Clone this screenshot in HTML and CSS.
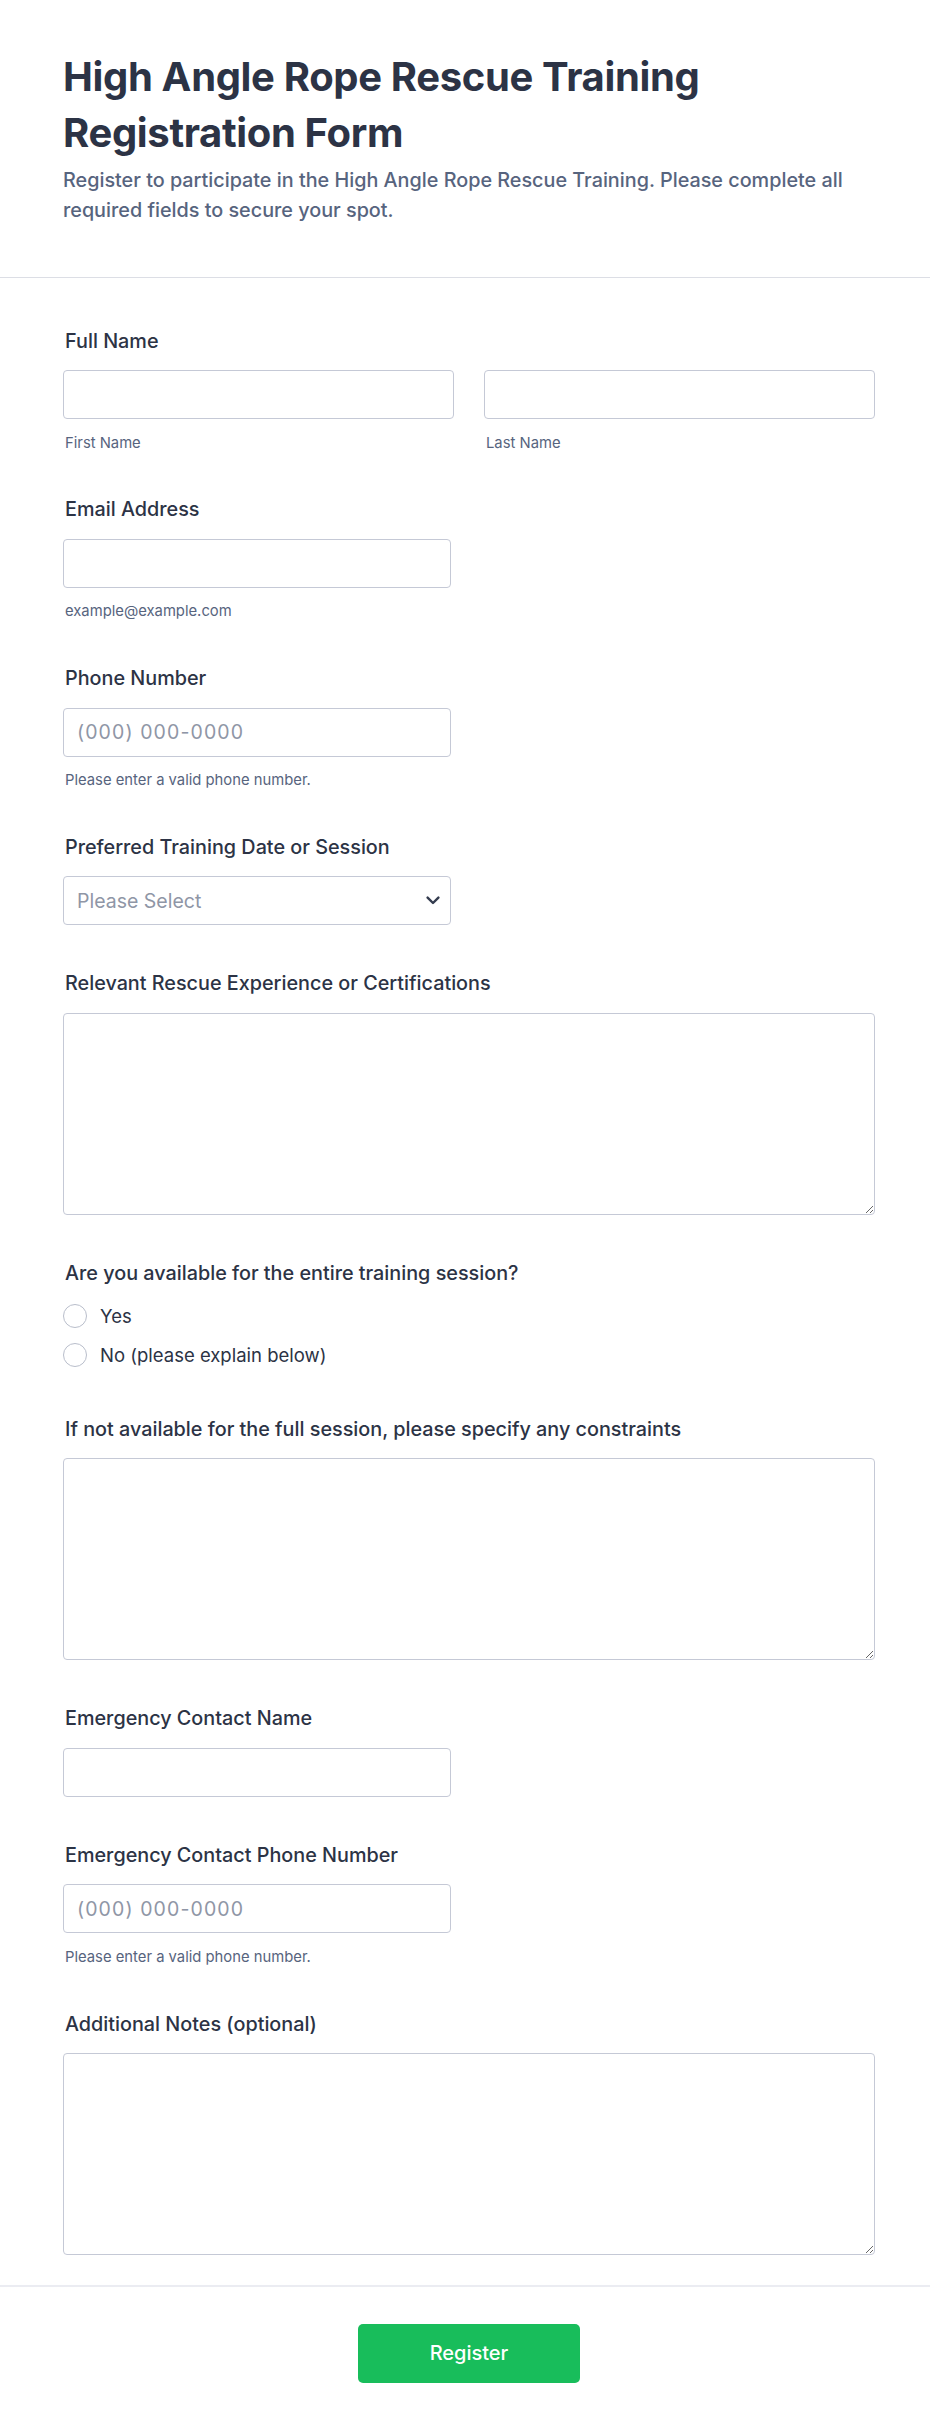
FILE: index.html
```html
<!DOCTYPE html>
<html lang="en">
<head>
<meta charset="utf-8">
<title>High Angle Rope Rescue Training Registration Form</title>
<link rel="stylesheet" href="styles.css">
</head>
<body>
<div class="form">
  <header class="form-header">
    <h1 class="form-title">High Angle Rope Rescue Training Registration Form</h1>
    <p class="form-desc">Register to participate in the High Angle Rope Rescue Training. Please complete all required fields to secure your spot.</p>
  </header>

  <main class="form-body">
    <div class="field field-sub">
      <label class="field-label">Full Name</label>
      <div class="name-row">
        <div class="name-col">
          <input class="input" type="text">
          <span class="sublabel">First Name</span>
        </div>
        <div class="name-col">
          <input class="input" type="text">
          <span class="sublabel">Last Name</span>
        </div>
      </div>
    </div>

    <div class="field field-sub">
      <label class="field-label">Email Address</label>
      <input class="input half" type="email">
      <span class="sublabel">example@example.com</span>
    </div>

    <div class="field field-sub">
      <label class="field-label">Phone Number</label>
      <input class="input half phone" type="tel" placeholder="(000) 000-0000">
      <span class="sublabel">Please enter a valid phone number.</span>
    </div>

    <div class="field">
      <label class="field-label">Preferred Training Date or Session</label>
      <div class="select-wrap half">
        <select class="input select">
          <option>Please Select</option>
        </select>
        <svg class="chevron" width="14" height="9" viewBox="0 0 14 9" aria-hidden="true"><path d="M1.6 1.6 L7 7 L12.4 1.6" fill="none" stroke="#343c4f" stroke-width="2.4" stroke-linecap="round" stroke-linejoin="round"/></svg>
      </div>
    </div>

    <div class="field">
      <label class="field-label">Relevant Rescue Experience or Certifications</label>
      <textarea class="input textarea"></textarea>
    </div>

    <div class="field field-radio">
      <label class="field-label">Are you available for the entire training session?</label>
      <div class="radios">
        <label class="radio"><input type="radio" name="avail"><span>Yes</span></label>
        <label class="radio"><input type="radio" name="avail"><span>No (please explain below)</span></label>
      </div>
    </div>

    <div class="field">
      <label class="field-label">If not available for the full session, please specify any constraints</label>
      <textarea class="input textarea"></textarea>
    </div>

    <div class="field">
      <label class="field-label">Emergency Contact Name</label>
      <input class="input half" type="text">
    </div>

    <div class="field field-sub">
      <label class="field-label">Emergency Contact Phone Number</label>
      <input class="input half phone" type="tel" placeholder="(000) 000-0000">
      <span class="sublabel">Please enter a valid phone number.</span>
    </div>

    <div class="field field-last">
      <label class="field-label">Additional Notes (optional)</label>
      <textarea class="input textarea"></textarea>
    </div>
  </main>

  <footer class="form-footer">
    <button class="submit" type="button">Register</button>
  </footer>
</div>
</body>
</html>
```

FILE: styles.css
```css
* { box-sizing: border-box; }

html, body {
  margin: 0;
  padding: 0;
  background: #ffffff;
}

body {
  font-family: Inter, "Noto Sans", "Liberation Sans", sans-serif;
  color: #2c3345;
}

.form {
  width: 930px;
}

.form-header {
  padding: 48.5px 55px 52px 63px;
  border-bottom: 1px solid #dcdee5;
}

.form-title {
  margin: 0;
  font-size: 40px;
  line-height: 56px;
  font-weight: 700;
  color: #2c3345;
  letter-spacing: -0.35px;
}

.form-desc {
  margin: 4px 0 0;
  font-size: 19.8px;
  line-height: 30px;
  font-weight: 500;
  color: #57647e;
}

.form-body {
  padding: 51px 55px 30px 63px;
  display: flex;
  flex-direction: column;
}

.field {
  display: flex;
  flex-direction: column;
  margin-bottom: 46px;
}

.field-sub {
  margin-bottom: 44.7px;
}

.field-radio {
  margin-bottom: 49.8px;
}

.field-last {
  margin-bottom: 0;
}

.field-label {
  display: block;
  font-size: 19.8px;
  line-height: 24px;
  font-weight: 500;
  color: #2c3345;
  padding-left: 2px;
  margin-bottom: 17.5px;
}

.name-row {
  display: grid;
  grid-template-columns: 391px 391px;
  column-gap: 30px;
}

.name-col {
  display: flex;
  flex-direction: column;
}

.input {
  display: block;
  width: 100%;
  height: 49px;
  border: 1px solid #c5c9d6;
  border-radius: 4px;
  background: #ffffff;
  font-family: Inter, "Noto Sans", "Liberation Sans", sans-serif;
  font-size: 19.5px;
  color: #2c3345;
  padding: 0 13px;
  outline: none;
  margin: 0;
}

.input::placeholder {
  color: #8f96a6;
  opacity: 1;
}

.phone::placeholder {
  letter-spacing: 1.1px;
}

.half {
  width: 388px;
}

.sublabel {
  display: block;
  margin-top: 13.6px;
  font-size: 14.8px;
  line-height: 20px;
  color: #57647e;
  padding-left: 2px;
}

.select-wrap {
  position: relative;
}

.select {
  appearance: none;
  -webkit-appearance: none;
  color: #8f96a6;
  cursor: pointer;
}

.chevron {
  position: absolute;
  right: 11px;
  top: 20px;
  pointer-events: none;
}

.textarea {
  height: 202px;
  resize: vertical;
  padding: 12px 13px;
}

.radios {
  display: flex;
  flex-direction: column;
  gap: 15px;
  padding-top: 1.7px;
}

.radio {
  display: flex;
  align-items: center;
  gap: 13px;
  height: 24px;
  font-size: 18.5px;
  color: #2c3345;
}

.radio input {
  appearance: none;
  -webkit-appearance: none;
  width: 24px;
  height: 24px;
  margin: 0;
  border: 1px solid #b9becb;
  border-radius: 50%;
  background: #ffffff;
  flex: none;
}

.form-footer {
  border-top: 2px solid #ebecf2;
  padding: 36.5px 55px 49px 63px;
  display: flex;
  justify-content: center;
}

.submit {
  width: 222px;
  height: 59px;
  border: none;
  border-radius: 5px;
  background: #18bd5b;
  color: #ffffff;
  font-family: Inter, "Noto Sans", "Liberation Sans", sans-serif;
  font-size: 20px;
  font-weight: 500;
  cursor: pointer;
}
```
